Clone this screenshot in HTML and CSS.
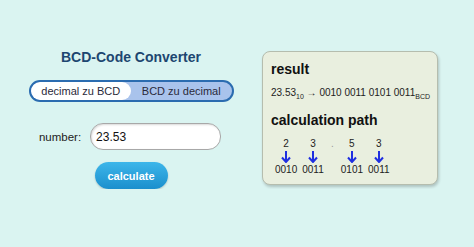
FILE: index.html
```html
<!DOCTYPE html>
<html lang="en">
<head>
    <meta charset="UTF-8">
    <meta name="viewport" content="width=device-width, initial-scale=1.0">
    <title>BCD-Code Converter</title>
    <link rel="stylesheet" href="styles.css">
</head>
<body>
    <div class="page">
        <div class="converter">
            <h2>BCD-Code Converter</h2>
            <div class="toggle">
                <span class="mode active">decimal zu BCD</span>
                <span class="mode">BCD zu decimal</span>
            </div>
            <div class="input-row">
                <label for="numberInput">number:</label>
                <input type="text" id="numberInput" value="23.53">
            </div>
            <button type="button">calculate</button>
        </div>

        <div class="card">
            <h3>result</h3>
            <p class="result">23.53<sub>10</sub> &rarr; 0010 0011 0101 0011<sub>BCD</sub></p>
            <h3 class="path-title">calculation path</h3>
            <div class="path">
                <div class="step">
                    <span>2</span>
                    <svg width="10" height="12" viewBox="0 0 10 12"><path d="M5 0V11M1 6.5L5 11L9 6.5" fill="none" stroke="#1f2fe0" stroke-width="2"/></svg>
                    <span>0010</span>
                </div>
                <div class="step">
                    <span>3</span>
                    <svg width="10" height="12" viewBox="0 0 10 12"><path d="M5 0V11M1 6.5L5 11L9 6.5" fill="none" stroke="#1f2fe0" stroke-width="2"/></svg>
                    <span>0011</span>
                </div>
                <div class="step dot">
                    <span>.</span>
                </div>
                <div class="step">
                    <span>5</span>
                    <svg width="10" height="12" viewBox="0 0 10 12"><path d="M5 0V11M1 6.5L5 11L9 6.5" fill="none" stroke="#1f2fe0" stroke-width="2"/></svg>
                    <span>0101</span>
                </div>
                <div class="step">
                    <span>3</span>
                    <svg width="10" height="12" viewBox="0 0 10 12"><path d="M5 0V11M1 6.5L5 11L9 6.5" fill="none" stroke="#1f2fe0" stroke-width="2"/></svg>
                    <span>0011</span>
                </div>
            </div>
        </div>
    </div>
</body>
</html>
```

FILE: styles.css
```css
body {
    margin: 0;
    background-color: #daf4f1;
    font-family: "Liberation Sans", Arial, sans-serif;
    color: #222;
}
.page {
    display: flex;
    align-items: flex-start;
}
.converter {
    width: 262px;
    display: flex;
    flex-direction: column;
    align-items: center;
    padding-top: 49px;
}
h2 {
    margin: 0;
    font-size: 14px;
    line-height: 17px;
    color: #1d4670;
}
.toggle {
    display: flex;
    margin-top: 14px;
    width: 201px;
    height: 18px;
    border: 2px solid #2b6cb0;
    border-radius: 11px;
    background: #a9c3ec;
    overflow: hidden;
}
.mode {
    flex: 1;
    text-align: center;
    font-size: 11px;
    line-height: 18px;
    color: #2a2a3a;
}
.mode.active {
    background: white;
    border-radius: 10px;
}
.input-row {
    display: flex;
    align-items: center;
    gap: 9px;
    margin-top: 21px;
    margin-left: -2px;
}
label {
    font-size: 11.5px;
}
input[type="text"] {
    width: 119px;
    height: 25px;
    padding: 0 5px;
    border: 1.5px solid #a8a8a8;
    border-radius: 13px;
    font-family: inherit;
    font-size: 12px;
    color: #111;
    background: white;
    box-shadow: inset 1px 1px 2px rgba(0,0,0,0.15);
}
button {
    margin-top: 12px;
    width: 73px;
    height: 27px;
    border: none;
    border-radius: 14px;
    background: linear-gradient(#3db6ea, #1b8fcd);
    color: white;
    font-family: inherit;
    font-weight: bold;
    font-size: 11px;
    box-shadow: 0 1px 2px rgba(0,0,0,0.2);
}
.card {
    margin-top: 51px;
    width: 158px;
    height: 119px;
    padding: 8px 8px 5px;
    background: #e9efdf;
    border: 1px solid #b5bdae;
    border-radius: 8px;
    box-shadow: 1px 2px 3px rgba(0,0,0,0.2);
}
h3 {
    margin: 0;
    font-size: 14px;
    line-height: 18px;
    color: #111;
}
.result {
    margin: 9px 0 0;
    font-size: 10px;
    line-height: 12px;
    white-space: nowrap;
}
sub {
    font-size: 7px;
    line-height: 0;
}
.path-title {
    margin-top: 12px;
}
.path {
    display: flex;
    gap: 5px;
    margin-top: 9px;
    padding-left: 4px;
}
.step {
    display: flex;
    flex-direction: column;
    align-items: center;
    font-size: 10px;
    line-height: 12px;
}
.step svg {
    margin: 1px 0 1px;
}
.step.dot {
    width: 7px;
    color: #999;
}
```
